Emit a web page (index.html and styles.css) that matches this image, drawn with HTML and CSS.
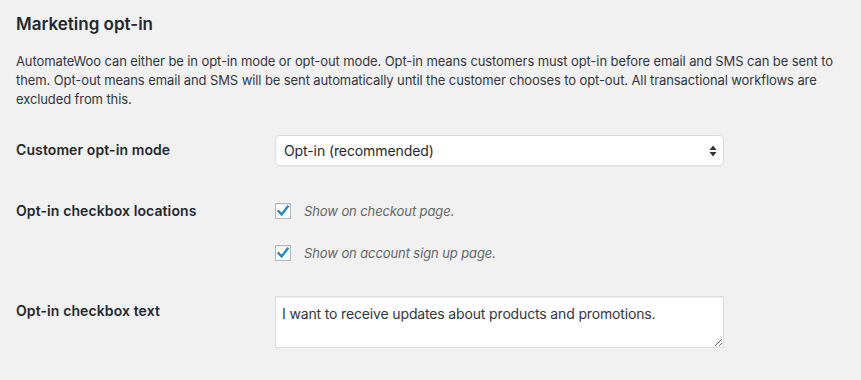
FILE: index.html
```html
<!DOCTYPE html>
<html lang="en">
<head>
<meta charset="utf-8">
<title>Marketing opt-in</title>
<link rel="stylesheet" href="styles.css">
</head>
<body>
<div class="wrap">
  <h2 class="title">Marketing opt-in</h2>
  <p class="desc">AutomateWoo can either be in opt-in mode or opt-out mode. Opt-in means customers must opt-in before email and SMS can be sent to them. Opt-out means email and SMS will be sent automatically until the customer chooses to opt-out. All transactional workflows are excluded from this.</p>

  <div class="form-table">
    <div class="row row-mode">
      <div class="th">Customer opt-in mode</div>
      <div class="td">
        <div class="select-wrap">
          <select class="select">
            <option>Opt-in (recommended)</option>
            <option>Opt-out</option>
          </select>
          <svg class="select-arrows" width="8" height="12" viewBox="0 0 8 12"><path d="M4 0.5 L7.5 5 L0.5 5 Z M4 11.5 L7.5 7 L0.5 7 Z" fill="#333"/></svg>
        </div>
      </div>
    </div>

    <div class="row row-loc">
      <div class="th">Opt-in checkbox locations</div>
      <div class="td checks">
        <label class="check">
          <span class="box"><svg width="16" height="16" viewBox="0 0 16 16"><path d="M3.6 8.2 L6.6 11.4 L12.6 3.8" fill="none" stroke="#1e8cbe" stroke-width="2.4" stroke-linecap="square" stroke-linejoin="miter"/></svg></span>
          <span class="check-text">Show on checkout page.</span>
        </label>
        <label class="check">
          <span class="box"><svg width="16" height="16" viewBox="0 0 16 16"><path d="M3.6 8.2 L6.6 11.4 L12.6 3.8" fill="none" stroke="#1e8cbe" stroke-width="2.4" stroke-linecap="square" stroke-linejoin="miter"/></svg></span>
          <span class="check-text">Show on account sign up page.</span>
        </label>
      </div>
    </div>

    <div class="row row-text">
      <div class="th">Opt-in checkbox text</div>
      <div class="td">
        <textarea class="textarea">I want to receive updates about products and promotions.</textarea>
      </div>
    </div>
  </div>
</div>
</body>
</html>
```

FILE: styles.css
```css
html, body {
  margin: 0;
  padding: 0;
  background: #f1f1f1;
}

body {
  font-family: Inter, "Open Sans", sans-serif;
  font-size: 13px;
  color: #23282d;
}

.wrap {
  padding: 0 16px;
}

.title {
  margin: 14px 0 0;
  font-size: 17px;
  line-height: 20px;
  font-weight: 600;
  color: #23282d;
}

.desc {
  margin: 18px 0 0;
  font-size: 13px;
  line-height: 19px;
  letter-spacing: -0.1px;
  color: #32373c;
}

.form-table {
  margin-top: 11px;
}

.row {
  display: flex;
}

.th {
  width: 259px;
  flex: none;
  font-weight: 600;
  font-size: 14px;
  letter-spacing: 0.1px;
  line-height: 19px;
  padding-top: 20px;
  color: #23282d;
}

.td {
  width: 449px;
}

.row-mode .td {
  padding: 15px 0;
}

.select-wrap {
  position: relative;
}

.select {
  appearance: none;
  -webkit-appearance: none;
  display: block;
  width: 449px;
  height: 31px;
  box-sizing: border-box;
  margin: 0;
  padding: 0 24px 0 8px;
  border: 1px solid #dcdcdc;
  border-radius: 5px;
  background: #fff;
  font-family: Inter, "Open Sans", sans-serif;
  font-size: 14px;
  letter-spacing: -0.1px;
  color: #23282d;
  box-shadow: 0 1px 1px rgba(0,0,0,0.04);
}

.select-arrows {
  position: absolute;
  right: 7px;
  top: 10px;
  pointer-events: none;
}

.checks {
  display: flex;
  flex-direction: column;
  padding-bottom: 20px;
}

.check {
  display: flex;
  align-items: center;
  height: 16px;
  margin-top: 26px;
}

.check:first-child {
  margin-top: 22px;
}

.box {
  width: 16px;
  height: 16px;
  box-sizing: border-box;
  border: 1px solid #b4b9be;
  background: #fff;
  box-shadow: inset 0 1px 2px rgba(0,0,0,0.1);
  display: flex;
  align-items: center;
  justify-content: center;
  flex: none;
}

.box svg {
  display: block;
  margin: -1px;
}

.check-text {
  margin-left: 13px;
  font-style: italic;
  color: #666;
  font-size: 13px;
  letter-spacing: -0.1px;
  line-height: 19px;
  padding-top: 1px;
}

.row-text .td {
  padding-top: 15px;
}

.textarea {
  display: block;
  width: 449px;
  height: 52px;
  box-sizing: border-box;
  margin: 0;
  padding: 7px 6px;
  border: 1px solid #ddd;
  background: #fff;
  box-shadow: inset 0 1px 2px rgba(0,0,0,0.07);
  font-family: Inter, "Open Sans", sans-serif;
  font-size: 14px;
  letter-spacing: -0.15px;
  line-height: 20px;
  color: #32373c;
  resize: vertical;
}
```
